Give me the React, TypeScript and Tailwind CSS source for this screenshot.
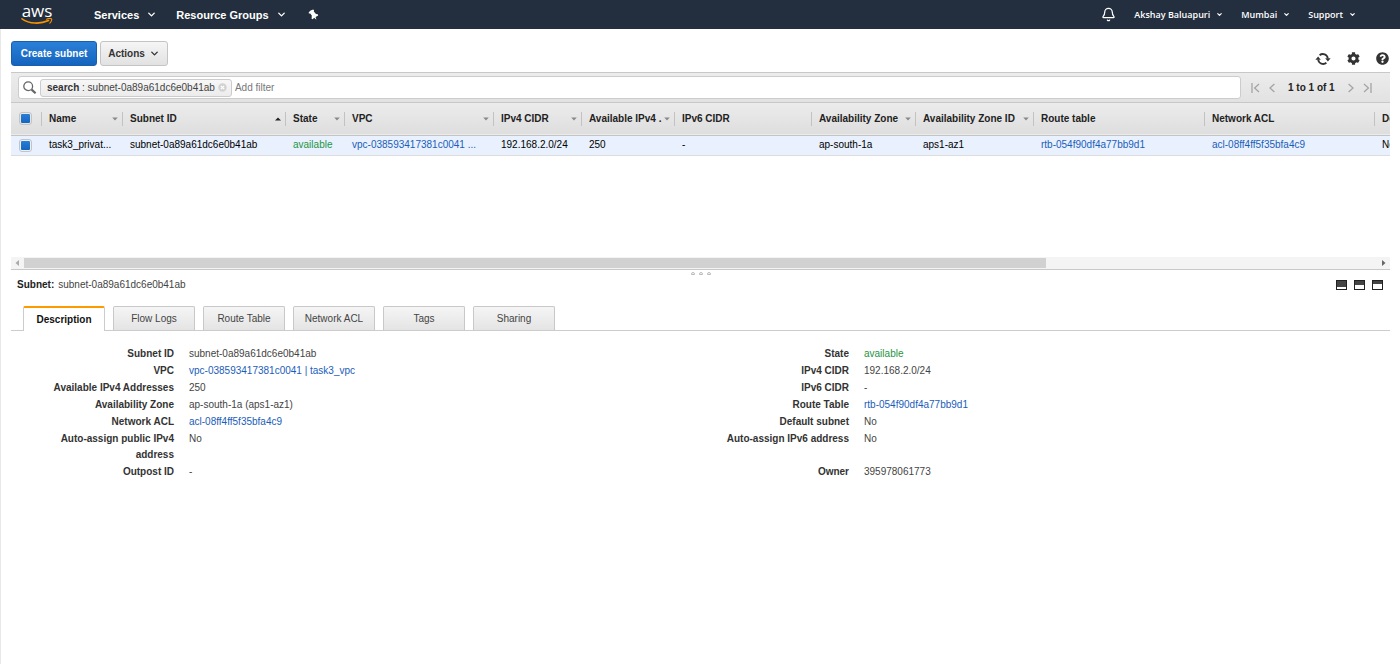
import { FaCog, FaQuestionCircle } from 'react-icons/fa';
import { Bell, ChevronDown } from 'lucide-react';

const COLUMNS = [
    { title: 'Name', width: 'w-[81px]', sort: 'down' },
    { title: 'Subnet ID', width: 'w-[163px]', sort: 'up' },
    { title: 'State', width: 'w-[59px]', sort: 'down' },
    { title: 'VPC', width: 'w-[149px]', sort: 'down' },
    { title: 'IPv4 CIDR', width: 'w-[88px]', sort: 'down' },
    { title: 'Available IPv4 .', width: 'w-[93px]', sort: 'down' },
    { title: 'IPv6 CIDR', width: 'w-[137px]', sort: '' },
    { title: 'Availability Zone', width: 'w-[104px]', sort: 'down' },
    { title: 'Availability Zone ID', width: 'w-[118px]', sort: 'down' },
    { title: 'Route table', width: 'w-[171px]', sort: '' },
    { title: 'Network ACL', width: 'w-[170px]', sort: '' },
    { title: 'Default subnet', width: 'w-[120px]', sort: '' },
];

const TABS = ['Description', 'Flow Logs', 'Route Table', 'Network ACL', 'Tags', 'Sharing'];

// label / value pairs, two per row
const DETAILS = [
    ['Subnet ID', 'subnet-0a89a61dc6e0b41ab', 'State', 'available'],
    ['VPC', 'vpc-038593417381c0041 | task3_vpc', 'IPv4 CIDR', '192.168.2.0/24'],
    ['Available IPv4 Addresses', '250', 'IPv6 CIDR', '-'],
    ['Availability Zone', 'ap-south-1a (aps1-az1)', 'Route Table', 'rtb-054f90df4a77bb9d1'],
    ['Network ACL', 'acl-08ff4ff5f35bfa4c9', 'Default subnet', 'No'],
    ['Auto-assign public IPv4 address', 'No', 'Auto-assign IPv6 address', 'No'],
    ['Outpost ID', '-', 'Owner', '395978061773'],
];

function Value({ text }: { text: string }) {
    if (/^(vpc|rtb|acl)-/.test(text)) {
        return <a href="#" className="text-[#1a5dba]">{text}</a>;
    }
    if (text === 'available') {
        return <span className="text-[#1f9442]">{text}</span>;
    }
    return <>{text}</>;
}

function Checkbox({ label }: { label: string }) {
    return (
        <input
            type="checkbox"
            defaultChecked
            aria-label={label}
            className="block size-[13px] appearance-none rounded-[3px] border border-[#c3c3c3] bg-white p-px checked:bg-linear-to-b checked:from-[#2a80d8] checked:to-[#1263bd] checked:bg-clip-content"
        />
    );
}

function Logo() {
    return (
        <a href="#" aria-label="aws" className="flex w-[32px] flex-col items-center font-['Open_Sans',sans-serif] text-[17px] leading-[14px] font-medium text-white">
            <span className="h-[14px]">aws</span>
            <svg className="h-[8px] w-[32px]" viewBox="0 0 32 8" fill="none">
                <path d="M1 0.8C8.5 6 19 6.4 27.6 2.6" stroke="#f79400" strokeWidth="1.6" strokeLinecap="round" />
                <path d="M25.6 1.2C27.4 0.4 30 0.4 30.6 0.9C31 1.6 30.2 4 28.8 5.2" stroke="#f79400" strokeWidth="1.1" strokeLinecap="round" />
            </svg>
        </a>
    );
}

function PinIcon() {
    return (
        <svg className="h-[12px] w-[11px]" viewBox="0 0 11 12" fill="currentColor">
            <path d="M2.6 1.6L5.2 0.4L6 1.2L5.8 2.6L8 5L9.8 5.2L10.2 6.4L7.6 8L8.4 10.8L6.2 8.8L4.6 10.2L3.6 9.8L3.8 6.6L2.2 4.6L0.8 4.4L0.8 3.2Z" />
        </svg>
    );
}

function RefreshIcon() {
    return (
        <svg className="h-[14px] w-[16px]" viewBox="0 0 16 14" fill="none">
            <path d="M4.6 3.2A5 5 0 0 1 12.8 6.5" stroke="#333" strokeWidth="1.8" />
            <path d="M11.4 10.8A5 5 0 0 1 3.2 7.5" stroke="#333" strokeWidth="1.8" />
            <path d="M0.4 7.8L3.1 4.6L5.8 7.8Z" fill="#333" />
            <path d="M10.2 6.2L15.6 6.2L12.9 9.4Z" fill="#333" />
        </svg>
    );
}

function SortArrow({ dir }: { dir: string }) {
    return (
        <svg className="h-[4px] w-[6px] shrink-0" viewBox="0 0 6 4">
            {dir === 'up' ? <path d="M0 3.6L3 0.4L6 3.6Z" fill="#222" /> : <path d="M0.2 0.4H5.8L3 3.6Z" fill="#888" />}
        </svg>
    );
}

function PagerIcon({ d, label }: { d: string; label: string }) {
    return (
        <button aria-label={label} className="text-[#a5a5a5]">
            <svg className="h-[10px] w-[9px]" viewBox="0 0 9 10" fill="none" stroke="currentColor" strokeWidth="1.3">
                <path d={d} />
            </svg>
        </button>
    );
}

function PaneIcon({ fill, label }: { fill: number; label: string }) {
    return (
        <button aria-label={label}>
            <svg className="h-[10px] w-[11px]" viewBox="0 0 11 10">
                <rect width="11" height="10" fill="#222" />
                <rect x="1" y="1" width="9" height={fill} fill="#444" />
                <rect x="1" y={fill + 1} width="9" height={8 - fill} fill="#fff" />
            </svg>
        </button>
    );
}

function NavBar() {
    return (
        <nav className="flex h-[29px] items-center bg-[#232f3e] pr-[44px] pl-[21px] text-white">
            <Logo />
            <button className="ml-[41px] flex items-center gap-[7px] text-[11px] leading-[16px] font-bold">
                Services
                <ChevronDown className="size-[11px]" strokeWidth={3} />
            </button>
            <button className="ml-[19px] flex items-center gap-[7px] text-[11px] leading-[16px] font-bold">
                Resource Groups
                <ChevronDown className="size-[11px]" strokeWidth={3} />
            </button>
            <button aria-label="Pin shortcuts" className="ml-[21px]">
                <PinIcon />
            </button>
            <div className="ml-auto flex items-center gap-[18px] font-['Open_Sans',sans-serif] text-[9px] leading-[16px] font-semibold">
                <button aria-label="Notifications">
                    <Bell className="size-[15px]" strokeWidth={2} />
                </button>
                {['Akshay Baluapuri', 'Mumbai', 'Support'].map((item) => (
                    <button key={item} className="flex items-center gap-1.5">
                        {item}
                        <ChevronDown className="size-[7px]" strokeWidth={4} />
                    </button>
                ))}
            </div>
        </nav>
    );
}

function FilterBar() {
    return (
        <div className="flex h-[31px] items-center border-y border-[#c8c8c8] bg-linear-to-b from-[#ececec] to-[#e2e2e2] pl-[7px]">
            <div className="flex h-[23px] flex-1 items-center rounded-[3px] border border-[#ccc] bg-white pl-1">
                <svg className="h-[13px] w-[14px]" viewBox="0 0 14 13" fill="none" stroke="#666">
                    <circle cx="5.2" cy="5.2" r="4.4" strokeWidth="1.3" />
                    <path d="M8.6 8.6L12.6 12.2" strokeWidth="2.2" />
                </svg>
                <div className="ml-[3px] flex h-[18px] items-center rounded-[3px] border border-[#ccc] bg-linear-to-b from-[#f7f7f7] to-[#ececec] pr-1 pl-1.5 text-[10px] text-[#444]">
                    <span><b className="text-[#333]">search</b> : subnet-0a89a61dc6e0b41ab</span>
                    <button aria-label="Remove filter" className="ml-[3px]">
                        <svg className="size-[9px]" viewBox="0 0 9 9">
                            <circle cx="4.5" cy="4.5" r="4.2" fill="#d2d2d2" />
                            <path d="M2.8 2.8L6.2 6.2M6.2 2.8L2.8 6.2" stroke="#fff" strokeWidth="1.2" />
                        </svg>
                    </button>
                </div>
                <input
                    type="text"
                    aria-label="Add filter"
                    placeholder="Add filter"
                    className="h-[18px] min-w-0 flex-1 pl-[3px] text-[10px] outline-none placeholder:text-[#777]"
                />
            </div>
            <div className="flex w-[149px] items-center gap-2 pl-2.5 text-[10px] font-bold text-[#222]">
                <PagerIcon label="First page" d="M1 0V10M8 1L3.6 5L8 9" />
                <PagerIcon label="Previous page" d="M6.4 1L2 5L6.4 9" />
                <span className="px-[3px] whitespace-nowrap">1 to 1 of 1</span>
                <PagerIcon label="Next page" d="M2.6 1L7 5L2.6 9" />
                <PagerIcon label="Last page" d="M1 1L5.4 5L1 9M8 0V10" />
            </div>
        </div>
    );
}

function SubnetTable() {
    return (
        <div className="overflow-hidden">
            <table className="w-[1483px] table-fixed text-left text-[10px] leading-[16px]">
                <thead>
                    <tr className="h-[32px] border-b border-[#c4c4c4] bg-linear-to-b from-[#ececec] to-[#dedede] text-[#222]">
                        <th className="w-[30px] pl-2">
                            <Checkbox label="Select all subnets" />
                        </th>
                        {COLUMNS.map((col) => (
                            <th key={col.title} className={col.width}>
                                <div className="flex h-[14px] items-center justify-between border-l border-[#c2c2c2] pr-1 pl-[7px] whitespace-nowrap">
                                    {col.title}
                                    {col.sort && <SortArrow dir={col.sort} />}
                                </div>
                            </th>
                        ))}
                    </tr>
                </thead>
                <tbody>
                    <tr className="h-[20px] border-b border-[#dcdcdc] bg-[#e8f1fd] text-black [&>td]:truncate [&>td]:pl-2">
                        <td>
                            <Checkbox label="Select task3 subnet" />
                        </td>
                        <td>task3_privat...</td>
                        <td>subnet-0a89a61dc6e0b41ab</td>
                        <td><Value text="available" /></td>
                        <td><Value text="vpc-038593417381c0041 ..." /></td>
                        <td>192.168.2.0/24</td>
                        <td>250</td>
                        <td>-</td>
                        <td>ap-south-1a</td>
                        <td>aps1-az1</td>
                        <td><Value text="rtb-054f90df4a77bb9d1" /></td>
                        <td><Value text="acl-08ff4ff5f35bfa4c9" /></td>
                        <td>No</td>
                    </tr>
                </tbody>
            </table>
        </div>
    );
}

function ScrollTrack() {
    return (
        <div className="mt-[101px] flex h-[13px] items-center justify-between border-b border-[#c8c8c8] bg-[#f4f4f4]">
            <svg className="h-[6px] w-[13px]" viewBox="0 0 13 6"><path d="M8 0V6L4.5 3Z" fill="#aaa" /></svg>
            <div className="h-[10px] flex-1">
                <div className="h-full w-[75.5%] bg-[#d1d1d1]" />
            </div>
            <svg className="h-[6px] w-[13px]" viewBox="0 0 13 6"><path d="M5 0V6L8.5 3Z" fill="#666" /></svg>
        </div>
    );
}

function DetailPane() {
    return (
        <section>
            <div className="flex h-[7px] items-center justify-center gap-1">
                <i className="h-[3px] w-1 rounded-t-sm border border-[#bbb]" />
                <i className="h-[3px] w-1 rounded-t-sm border border-[#bbb]" />
                <i className="h-[3px] w-1 rounded-t-sm border border-[#bbb]" />
            </div>
            <div className="flex h-4 items-center justify-between pr-[7px] pl-1.5 text-[10px] text-[#444]">
                <p><b className="mr-1 text-[#222]">Subnet:</b>subnet-0a89a61dc6e0b41ab</p>
                <div className="flex gap-[7px]">
                    <PaneIcon fill={6} label="Collapse details" />
                    <PaneIcon fill={4} label="Split view" />
                    <PaneIcon fill={3} label="Expand details" />
                </div>
            </div>
            <div role="tablist" className="mt-[13px] flex h-[25px] items-end gap-2 border-b border-[#ccc] pl-3 text-[10px]">
                {TABS.map((tab, i) => (
                    <button
                        key={tab}
                        role="tab"
                        aria-selected={i === 0}
                        className={
                            i === 0
                                ? '-mb-px h-[25px] w-[82px] rounded-t-[2px] border-x border-t-2 border-x-[#ccc] border-t-[#ff9900] bg-white font-bold text-[#111]'
                                : 'h-[24px] w-[82px] rounded-t-[2px] border border-b-0 border-[#c8c8c8] bg-linear-to-b from-[#f5f5f5] to-[#e4e4e4] text-[#444]'
                        }
                    >
                        {tab}
                    </button>
                ))}
            </div>
            <dl className="grid grid-cols-[125px_1fr_125px_1fr] gap-x-[15px] gap-y-px pt-[15px] pr-1.5 pl-[38px] text-[10px] leading-[16px] text-[#444]">
                {DETAILS.flatMap((row) =>
                    row.map((text, i) =>
                        i % 2 === 0
                            ? <dt key={row[0] + i} className="text-right font-bold text-[#333]">{text}</dt>
                            : <dd key={row[0] + i}><Value text={text} /></dd>
                    )
                )}
            </dl>
        </section>
    );
}

export default function App() {
    return (
        <div className="min-h-screen bg-white font-['Liberation_Sans',Arial,sans-serif]">
            <NavBar />
            <main className="min-h-[635px] border-l border-[#e8e8e8] pr-2.5 pl-2.5">
                <div className="flex h-[43px] items-center gap-[3px] text-[10px] font-bold">
                    <button className="mt-1.5 h-[25px] w-[86px] rounded-[3px] border border-[#1a5fae] bg-linear-to-b from-[#2a80d8] to-[#1464be] text-white">
                        Create subnet
                    </button>
                    <button className="mt-1.5 flex h-[25px] w-[68px] items-center justify-center gap-1 rounded-[3px] border border-[#c4c4c4] bg-linear-to-b from-[#f5f5f5] to-[#e2e2e2] text-[#333]">
                        Actions
                        <ChevronDown className="size-[11px]" strokeWidth={3} />
                    </button>
                    <div className="mt-4 ml-auto flex items-center gap-4 pr-px text-[#333]">
                        <button aria-label="Refresh"><RefreshIcon /></button>
                        <button aria-label="Settings"><FaCog className="size-[13px]" /></button>
                        <button aria-label="Help"><FaQuestionCircle className="size-[13px]" /></button>
                    </div>
                </div>
                <FilterBar />
                <SubnetTable />
                <ScrollTrack />
                <DetailPane />
            </main>
        </div>
    );
}
